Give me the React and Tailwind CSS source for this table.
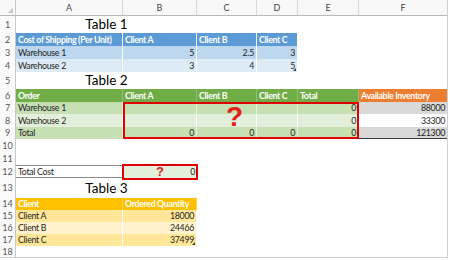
import React from "react";

// Column widths for A..F
const W = {
  A: "w-[107px]",
  B: "w-[74px]",
  C: "w-[60px]",
  D: "w-[41px]",
  E: "w-[61px]",
  F: "w-[88px]",
};

function Cell({ w, cls = "", right, center, children }) {
  const align = right ? "justify-end" : center ? "justify-center" : "justify-start";
  return (
    <div
      className={`${w} h-full shrink-0 flex items-center px-[2px] overflow-hidden whitespace-nowrap ${align} ${cls}`}
    >
      {children}
    </div>
  );
}

function Row({ n, h, children }) {
  return (
    <div className={`flex ${h}`}>
      <div className="w-[16px] h-full shrink-0 flex items-center justify-center border-r border-[#c8c8c8] bg-[#fafafa] text-[#555] text-[9px] tracking-normal">
        {n}
      </div>
      {children}
    </div>
  );
}

const hdr = "text-white font-bold tracking-[-0.35px]";
const blueH = `bg-[#5b9bd5] border-r border-white ${hdr}`;
const blue1 = "bg-[#bdd7ee] border-r border-white";
const blue2 = "bg-[#ddebf7] border-r border-white";
const greenH = `bg-[#70ad47] border-r border-[#8fc06c] ${hdr}`;
const green1 = "bg-[#c6e0b4] border-r border-[#e6f1de]";
const green2 = "bg-[#e2efda] border-r border-white";
const goldH = `bg-[#ffc000] border-r border-[#ffd24d] ${hdr}`;
const gold1 = "bg-[#ffe699] border-r border-white";
const gold2 = "bg-[#fff2cc] border-r border-white";

// small table-resize grip in the last cell of a table
function Handle() {
  return (
    <span className="absolute right-[1px] bottom-[1px] w-[3px] h-[3px] bg-[#404040] [clip-path:polygon(100%_0,100%_100%,0_100%)]" />
  );
}

export default function App() {
  return (
    <div className="relative w-[450px] h-[260px] bg-white overflow-hidden font-['Lato',sans-serif] text-[8.8px] tracking-[-0.3px] text-[#1e1e1e]">
      <div className="w-[448px] border-r border-b border-[#cfcfcf]">
        {/* column letters */}
        <div className="flex h-[16px] bg-[#f8f8f8] border-b border-[#b9b9b9] text-[#444] text-[9px] tracking-normal">
          <div className="relative w-[16px] h-full shrink-0 border-r border-[#c8c8c8]">
            <span className="absolute right-[2px] bottom-[2px] w-[5px] h-[5px] bg-[#c4c4c4] [clip-path:polygon(100%_0,100%_100%,0_100%)]" />
          </div>
          <Cell w={W.A} center cls="border-r border-[#d9d9d9]">A</Cell>
          <Cell w={W.B} center cls="border-r border-[#d9d9d9]">B</Cell>
          <Cell w={W.C} center cls="border-r border-[#d9d9d9]">C</Cell>
          <Cell w={W.D} center cls="border-r border-[#d9d9d9]">D</Cell>
          <Cell w={W.E} center cls="border-r border-[#d9d9d9]">E</Cell>
          <Cell w={W.F} center>F</Cell>
        </div>

        <Row n="1" h="h-[17px]">
          <Cell w="w-[181px]" center cls="text-[13.5px] tracking-normal text-black">Table 1</Cell>
        </Row>
        <Row n="2" h="h-[13px]">
          <Cell w={W.A} cls={blueH}>Cost of Shipping (Per Unit)</Cell>
          <Cell w={W.B} cls={blueH}>Client A</Cell>
          <Cell w={W.C} cls={blueH}>Client B</Cell>
          <Cell w={W.D} cls={blueH}>Client C</Cell>
        </Row>
        <Row n="3" h="h-[13px]">
          <Cell w={W.A} cls={blue1}>Warehouse 1</Cell>
          <Cell w={W.B} right cls={blue1}>5</Cell>
          <Cell w={W.C} right cls={blue1}>2.5</Cell>
          <Cell w={W.D} right cls={blue1}>3</Cell>
        </Row>
        <Row n="4" h="h-[13px]">
          <Cell w={W.A} cls={blue2}>Warehouse 2</Cell>
          <Cell w={W.B} right cls={blue2}>3</Cell>
          <Cell w={W.C} right cls={blue2}>4</Cell>
          <Cell w={W.D} right cls={`${blue2} relative`}>
            5
            <Handle />
          </Cell>
        </Row>
        <Row n="5" h="h-[17px]">
          <Cell w="w-[181px]" center cls="text-[13.5px] tracking-normal text-black">Table 2</Cell>
        </Row>
        <Row n="6" h="h-[13px]">
          <Cell w={W.A} cls={greenH}>Order</Cell>
          <Cell w={W.B} cls={greenH}>Client A</Cell>
          <Cell w={W.C} cls={greenH}>Client B</Cell>
          <Cell w={W.D} cls={greenH}>Client C</Cell>
          <Cell w={W.E} cls={greenH}>Total</Cell>
          <Cell w={W.F} cls={`bg-[#ed7d31] ${hdr}`}>Available Inventory</Cell>
        </Row>
        <Row n="7" h="h-[12px]">
          <Cell w={W.A} cls={green1}>Warehouse 1</Cell>
          <Cell w={W.B} cls={green1} />
          <Cell w={W.C} cls={green1} />
          <Cell w={W.D} cls={green1} />
          <Cell w={W.E} right cls={green1}>0</Cell>
          <Cell w={W.F} right cls="bg-[#d9d9d9]">88000</Cell>
        </Row>
        <Row n="8" h="h-[13px]">
          <Cell w={W.A} cls={green2}>Warehouse 2</Cell>
          <Cell w={W.B} cls={green2} />
          <Cell w={W.C} cls={green2} />
          <Cell w={W.D} cls={green2} />
          <Cell w={W.E} right cls={green2}>0</Cell>
          <Cell w={W.F} right cls="bg-white">33300</Cell>
        </Row>
        <Row n="9" h="h-[12px]">
          <Cell w={W.A} cls={green1}>Total</Cell>
          <Cell w={W.B} right cls={green1}>0</Cell>
          <Cell w={W.C} right cls={green1}>0</Cell>
          <Cell w={W.D} right cls={green1}>0</Cell>
          <Cell w={W.E} right cls={green1}>0</Cell>
          <Cell w={W.F} right cls="bg-[#d9d9d9] border-b border-[#3a3a3a]">121300</Cell>
        </Row>
        <Row n="10" h="h-[13px]" />
        <Row n="11" h="h-[13px]" />
        <Row n="12" h="h-[13px]">
          <Cell w={W.A} cls="border-t border-b border-[#8a8a8a]">Total Cost</Cell>
          <Cell w={W.B} right cls="bg-[#e2efda]">0</Cell>
        </Row>
        <Row n="13" h="h-[20px]">
          <Cell w="w-[181px]" center cls="text-[13.5px] tracking-normal text-black">Table 3</Cell>
        </Row>
        <Row n="14" h="h-[12px]">
          <Cell w={W.A} cls={goldH}>Client</Cell>
          <Cell w={W.B} cls={goldH}>Ordered Quantity</Cell>
        </Row>
        <Row n="15" h="h-[12px]">
          <Cell w={W.A} cls={gold1}>Client A</Cell>
          <Cell w={W.B} right cls={gold1}>18000</Cell>
        </Row>
        <Row n="16" h="h-[12px]">
          <Cell w={W.A} cls={gold2}>Client B</Cell>
          <Cell w={W.B} right cls={gold2}>24466</Cell>
        </Row>
        <Row n="17" h="h-[12px]">
          <Cell w={W.A} cls={gold1}>Client C</Cell>
          <Cell w={W.B} right cls={`${gold1} relative`}>
            37499
            <Handle />
          </Cell>
        </Row>
        <Row n="18" h="h-[11px]" />
      </div>

      {/* highlighted ranges */}
      <div className="absolute left-[123px] top-[102px] w-[236px] h-[37px] border-2 border-[#e00000]" />
      <div className="absolute left-[226px] top-[103px] text-[28px] leading-none font-bold text-[#e31b1b] font-['Liberation_Sans',sans-serif]">
        ?
      </div>
      <div className="absolute left-[122px] top-[164px] w-[76px] h-[16px] border-2 border-[#e00000]" />
      <div className="absolute left-[156px] top-[165px] text-[13px] leading-none font-bold text-[#e31b1b] font-['Liberation_Sans',sans-serif]">
        ?
      </div>
    </div>
  );
}
